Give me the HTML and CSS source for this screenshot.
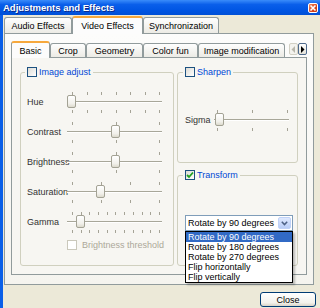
FILE: index.html
```html
<!DOCTYPE html>
<html lang="en">
<head>
	<meta charset="UTF-8">
	<title>Adjustments and Effects</title>
	<link rel="stylesheet" href="styles.css">
</head>
<body>
<div class="window">
	<div class="titlebar">
		<span class="title">Adjustments and Effects</span>
		<span class="close-x">
			<svg width="8" height="8" viewBox="0 0 8 8"><path d="M1.5 1.5 L6.5 6.5 M6.5 1.5 L1.5 6.5" stroke="#fff" stroke-width="1.6"/></svg>
		</span>
	</div>
	<div class="frame">
		<div class="tabs outer-tabs">
			<span class="tab tab-audio">Audio Effects</span>
			<span class="tab tab-video active">Video Effects</span>
			<span class="tab tab-sync">Synchronization</span>
		</div>
		<div class="outer-pane">
			<div class="tabs inner-tabs">
				<span class="tab tab-basic active">Basic</span>
				<span class="tab tab-crop">Crop</span>
				<span class="tab tab-geom">Geometry</span>
				<span class="tab tab-color">Color fun</span>
				<span class="tab tab-image">Image modification</span>
				<span class="scroll-btns">
					<span class="sbtn off"><svg width="5" height="7" viewBox="0 0 5 7"><path d="M4 0 L0.5 3.5 L4 7 Z" fill="#b9b7ab"/></svg></span>
					<span class="sbtn"><svg width="5" height="7" viewBox="0 0 5 7"><path d="M1 0 L4.5 3.5 L1 7 Z" fill="#000"/></svg></span>
				</span>
			</div>
			<div class="inner-pane">
				<fieldset class="group adjust">
					<legend><span class="legend-in"><span class="check"></span>Image adjust</span></legend>

					<div class="slider-row">
						<span class="label">Hue</span>
						<div class="slider">
							<div class="ticks"><i></i><i></i><i></i><i></i><i></i><i></i><i></i></div>
							<div class="track"><span class="thumb" style="margin-left:0px"></span></div>
							<div class="ticks below"><i></i><i></i><i></i><i></i><i></i><i></i><i></i></div>
						</div>
					</div>
					<div class="slider-row">
						<span class="label">Contrast</span>
						<div class="slider">
							<div class="ticks"><i></i><i></i><i></i></div>
							<div class="track"><span class="thumb" style="margin-left:44px"></span></div>
							<div class="ticks below"><i></i><i></i><i></i></div>
						</div>
					</div>
					<div class="slider-row">
						<span class="label">Brightness</span>
						<div class="slider">
							<div class="ticks"><i></i><i></i><i></i></div>
							<div class="track"><span class="thumb" style="margin-left:44px"></span></div>
							<div class="ticks below"><i></i><i></i><i></i></div>
						</div>
					</div>
					<div class="slider-row">
						<span class="label">Saturation</span>
						<div class="slider">
							<div class="ticks"><i></i><i></i><i></i><i></i></div>
							<div class="track"><span class="thumb" style="margin-left:29px"></span></div>
							<div class="ticks below"><i></i><i></i><i></i><i></i></div>
						</div>
					</div>
					<div class="slider-row">
						<span class="label">Gamma</span>
						<div class="slider">
							<div class="ticks"><i></i><i></i><i></i><i></i><i></i><i></i><i></i><i></i><i></i><i></i><i></i></div>
							<div class="track"><span class="thumb" style="margin-left:9px"></span></div>
							<div class="ticks below"><i></i><i></i><i></i><i></i><i></i><i></i><i></i><i></i><i></i><i></i><i></i></div>
						</div>
					</div>

					<div class="threshold"><span class="check off"></span>Brightness threshold</div>
				</fieldset>

				<div class="right-col">
					<fieldset class="group sharpen">
						<legend><span class="legend-in"><span class="check"></span>Sharpen</span></legend>
						<div class="slider-row sigma-row">
							<span class="label">Sigma</span>
							<div class="slider sigma">
								<div class="ticks"><i></i><i></i><i></i></div>
								<div class="track"><span class="thumb" style="margin-left:1px"></span></div>
								<div class="ticks below"><i></i><i></i><i></i></div>
							</div>
						</div>
					</fieldset>

					<fieldset class="group transform">
						<legend><span class="legend-in"><span class="check on"><svg width="8" height="8" viewBox="0 0 8 8"><path d="M1 4 L3 6 L7 1.5" stroke="#21a121" stroke-width="1.8" fill="none"/></svg></span>Transform</span></legend>
						<div class="combo-wrap">
							<div class="combo">
								<span>Rotate by 90 degrees</span>
								<span class="combo-btn"><svg width="7" height="5" viewBox="0 0 7 5"><path d="M0.8 0.8 L3.5 3.6 L6.2 0.8" stroke="#4d6185" stroke-width="1.5" fill="none"/></svg></span>
							</div>
							<ul class="dropdown">
								<li class="sel">Rotate by 90 degrees</li>
								<li>Rotate by 180 degrees</li>
								<li>Rotate by 270 degrees</li>
								<li>Flip horizontally</li>
								<li>Flip vertically</li>
							</ul>
						</div>
					</fieldset>
				</div>
			</div>
		</div>
		<div class="footer">
			<button class="btn">Close</button>
		</div>
	</div>
</div>
</body>
</html>
```

FILE: styles.css
```css
body {
	margin: 0;
	background: #ece9d8;
	font: 9px "Liberation Sans", Arial, sans-serif;
	color: #000;
}
.window {
	width: 320px;
	height: 308px;
	overflow: hidden;
	display: flex;
	flex-direction: column;
	background: #ece9d8;
}
.titlebar {
	flex: none;
	height: 15px;
	box-sizing: border-box;
	padding: 0 2px 0 3px;
	display: flex;
	align-items: center;
	justify-content: space-between;
	background: linear-gradient(#3a8cfa, #0a5fea 30%, #0055e3 70%, #0050d6);
	color: #fff;
	font-weight: bold;
	font-size: 9.5px;
}
.title {
	text-shadow: 1px 1px #0b2b8c;
}
.close-x {
	width: 10px;
	height: 10px;
	box-sizing: border-box;
	border: 1px solid #fff;
	border-radius: 2px;
	background: linear-gradient(135deg, #f08a62, #d9441c 60%, #c23a18);
	display: flex;
	align-items: center;
	justify-content: center;
}
.frame {
	flex: 1;
	display: flex;
	flex-direction: column;
	border-left: 3px solid #0a5fe8;
	padding-left: 1px;
}

/* tabs */
.tabs {
	display: flex;
	align-items: flex-end;
}
.outer-tabs {
	height: 18px;
}
.tab {
	box-sizing: border-box;
	height: 16px;
	border: 1px solid #919b9c;
	border-bottom: 0;
	border-radius: 3px 3px 0 0;
	background: linear-gradient(#fefefe, #ecebe5);
	display: flex;
	align-items: center;
	justify-content: center;
	white-space: nowrap;
}
.tab.active {
	height: 18px;
	margin-bottom: -1px;
	border-top: 2px solid #f6a83c;
	background: #fcfcfc;
	position: relative;
	z-index: 1;
}
.tab-audio { width: 68px; }
.tab-video { width: 71px; }
.tab-sync { width: 76px; }

.outer-pane {
	width: 310px;
	height: 252px;
	box-sizing: border-box;
	border: 1px solid #919b9c;
	background: linear-gradient(#fcfcfb, #f5f4ef);
	padding: 7px 6px 0;
}
.inner-tabs {
	height: 16px;
}
.inner-tabs .tab {
	height: 14px;
}
.inner-tabs .tab.active {
	height: 17px;
}
.tab-basic { width: 39px; }
.tab-crop { width: 36px; }
.tab-geom { width: 57px; }
.tab-color { width: 55px; }
.tab-image { width: 87px; }

.scroll-btns {
	margin-left: auto;
	align-self: flex-start;
	margin-top: 2px;
	display: flex;
}
.sbtn {
	width: 9px;
	height: 12px;
	box-sizing: border-box;
	border: 1px solid #4f6a8c;
	border-radius: 2px;
	background: linear-gradient(#fff, #e4e2d8);
	display: flex;
	align-items: center;
	justify-content: center;
}
.sbtn.off {
	border-color: #d2d0c4;
	background: #f4f3ee;
}

.inner-pane {
	height: 218px;
	box-sizing: border-box;
	border: 1px solid #919b9c;
	background: #f7f6f2;
	padding: 9px 8px 8px;
	display: flex;
	gap: 3px;
}

/* group boxes */
.group {
	margin: 0;
	min-width: 0;
	box-sizing: border-box;
	border: 1px solid #d0d0bf;
	border-radius: 3px;
	padding: 0 6px;
}
.group legend {
	padding: 0 2px;
	margin-left: -2px;
	height: 10px;
}
.legend-in {
	display: flex;
	align-items: center;
	gap: 2px;
	height: 10px;
	line-height: 10px;
	color: #0046d5;
}
.check {
	width: 10px;
	height: 10px;
	box-sizing: border-box;
	border: 1px solid #1c5180;
	background: linear-gradient(135deg, #dcdbd5, #fff);
	display: flex;
	align-items: center;
	justify-content: center;
	flex: none;
}
.check.off {
	border-color: #cac8bb;
	background: #fff;
}
.adjust {
	width: 154px;
	height: 199px;
	padding-top: 10px;
}
.right-col {
	width: 121px;
	display: flex;
	flex-direction: column;
	gap: 7px;
}
.sharpen {
	height: 96px;
	padding: 28px 7px 0;
}
.transform {
	height: 96px;
	padding: 35px 7px 0;
}

/* sliders */
.slider-row {
	display: grid;
	grid-template-columns: 40px 98px;
	align-items: center;
	height: 30px;
}
.sigma-row {
	grid-template-columns: 29px 78px;
}
.label {
	color: #333;
	white-space: nowrap;
}
.slider {
	height: 30px;
	box-sizing: border-box;
	padding-top: 5px;
}
.ticks {
	display: flex;
	justify-content: space-between;
	height: 3px;
	margin: 0 5px;
}
.sigma .ticks {
	margin: 0 4px 0 3px;
}
.ticks i {
	width: 1px;
	height: 3px;
	background: #a5a396;
}
.ticks.below {
	margin-top: 2px;
}
.track {
	height: 13px;
	margin-right: 3px;
	background: linear-gradient(transparent 6px, #a8a799 6px, #a8a799 7px, #fff 7px, #fff 8px, transparent 8px);
}
.thumb {
	display: block;
	width: 9px;
	height: 13px;
	box-sizing: border-box;
	border: 1px solid #a3a294;
	border-radius: 2px;
	background: linear-gradient(#fff, #f1f0ea 70%, #dcdacd);
}
.threshold {
	display: flex;
	align-items: center;
	gap: 5px;
	height: 10px;
	margin: 3px 0 0 40px;
	color: #aca899;
	white-space: nowrap;
}

/* combo */
.combo-wrap {
	position: relative;
	width: 108px;
}
.combo {
	height: 16px;
	box-sizing: border-box;
	border: 1px solid #7f9db9;
	background: #fff;
	padding: 0 1px 0 2px;
	display: flex;
	align-items: center;
	justify-content: space-between;
	white-space: nowrap;
}
.combo-btn {
	width: 13px;
	height: 12px;
	box-sizing: border-box;
	border: 1px solid #c0d2f8;
	border-radius: 2px;
	background: linear-gradient(#dfe9fe, #b9cdf7);
	display: flex;
	align-items: center;
	justify-content: center;
}
.dropdown {
	position: absolute;
	top: 16px;
	left: 0;
	width: 108px;
	box-sizing: border-box;
	margin: 0;
	padding: 0;
	list-style: none;
	border: 1px solid #000;
	background: #fff;
	box-shadow: 2px 2px 2px rgba(0, 0, 0, 0.25);
	z-index: 5;
}
.dropdown li {
	height: 10px;
	line-height: 10px;
	padding-left: 2px;
	white-space: nowrap;
}
.dropdown li.sel {
	background: #316ac5;
	color: #fff;
}

/* footer */
.footer {
	flex: 1;
	display: flex;
	justify-content: flex-end;
	align-items: flex-start;
	padding: 7px 4px 0 0;
}
.btn {
	width: 56px;
	height: 15px;
	padding: 0;
	border: 1px solid #003c74;
	border-radius: 3px;
	background: linear-gradient(#fff, #f3f2ec 75%, #d8d3c6);
	font: inherit;
	color: #000;
}
```
